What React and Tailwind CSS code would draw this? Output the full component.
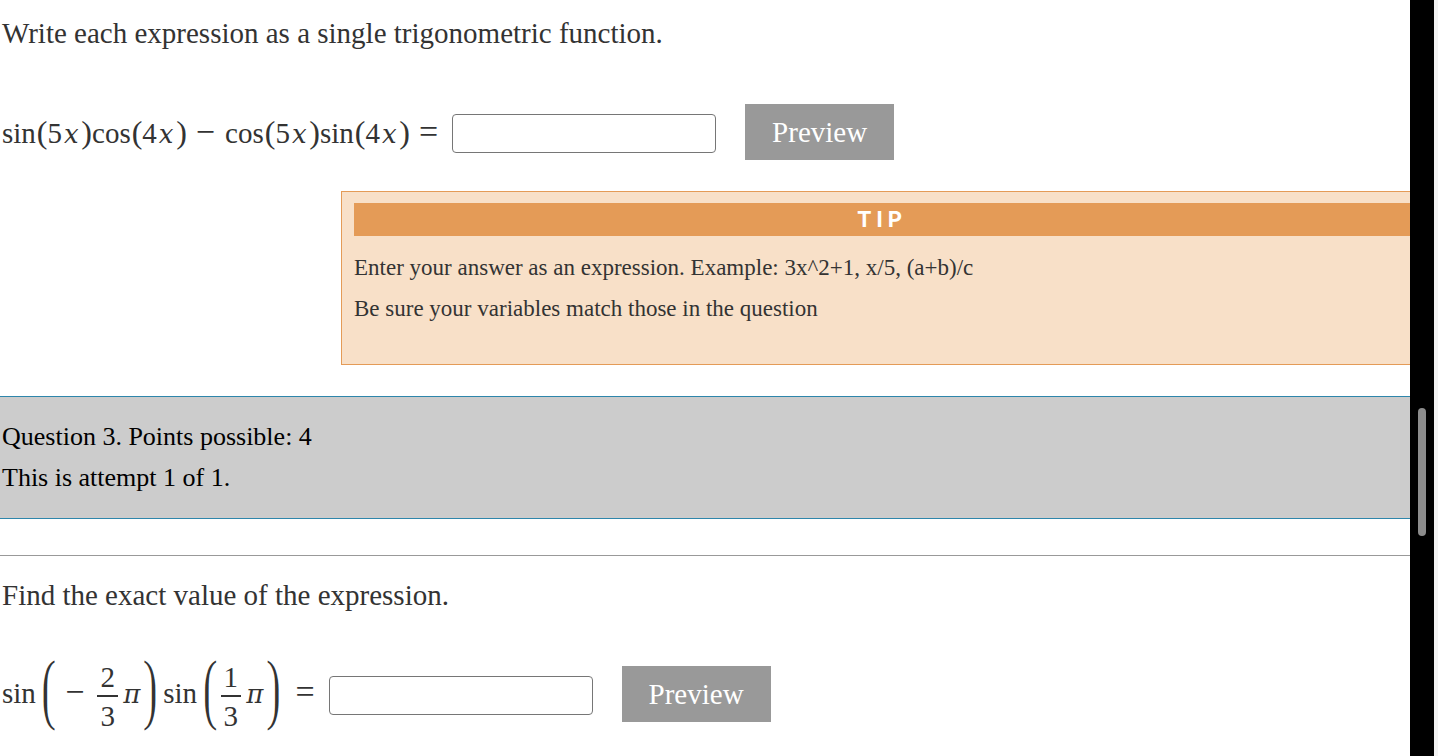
const MATH_FONT = "font-['DejaVu_Math_TeX_Gyre',serif]";

const Fn = ({ children }) => (
  <mi mathvariant="normal" className="font-['Liberation_Serif',serif] text-[29px]">
    {children}
  </mi>
);

const Variable = ({ children }) => <mi className={`${MATH_FONT} text-[26px]`}>{children}</mi>;

// Plain parenthesis for one line of text
const Paren = ({ children }) => (
  <mo stretchy="false" lspace="1px" rspace="0px" className="text-[32px]">
    {children}
  </mo>
);

// Parenthesis that grows with the fraction inside it
const TallParen = ({ children, lspace = '0px', rspace = '0px' }) => (
  <mo stretchy="true" symmetric="true" lspace={lspace} rspace={rspace} className={`${MATH_FONT} text-[27px]`}>
    {children}
  </mo>
);

const Operator = ({ children }) => (
  <mo lspace="9px" rspace="10px" className="text-[34px]">
    {children}
  </mo>
);

// Trig function of a multiple of x, e.g. sin(5x)
const TrigTerm = ({ fn, factor }) => (
  <mrow>
    <Fn>{fn}</Fn>
    <mrow>
      <Paren>(</Paren>
      <mn>{factor}</mn>
      <Variable>x</Variable>
      <Paren>)</Paren>
    </mrow>
  </mrow>
);

// Fraction of pi, used inside the second question
const PiFraction = ({ top, bottom }) => (
  <>
    <mfrac displaystyle="true" className="px-[3px]">
      <mn className="px-[3px] pb-1">{top}</mn>
      <mn className="px-[3px] pt-1.5">{bottom}</mn>
    </mfrac>
    <Variable>π</Variable>
  </>
);

const AnswerRow = ({ id, expression }) => (
  <div className="flex items-center">
    <label htmlFor={id} className="pt-1 text-[29px]">
      <math className="font-['Liberation_Serif',serif]">{expression}</math>
    </label>
    <input
      id={id}
      type="text"
      className="mt-[3px] ml-1 h-[39px] w-66 rounded border border-[#767676] bg-white px-2 text-[26px]"
    />
    <button type="button" className="ml-[29px] h-14 bg-[#999999] px-[27px] pt-0.5 text-[29px] text-white">
      Preview
    </button>
  </div>
);

const TipBox = () => (
  <section className="ml-[341px] border border-r-0 border-[#e49b57] bg-[#f8e0c8] pt-[11px] pb-[35px] pl-3">
    <h2 className="bg-[#e49b57] text-center font-['Inter',sans-serif] text-[22px] leading-[33px] font-bold tracking-[5px] text-white">
      TIP
    </h2>
    <div className="pt-[11px] text-[23px] leading-[41px]">
      <p>Enter your answer as an expression. Example: 3x^2+1, x/5, (a+b)/c</p>
      <p>Be sure your variables match those in the question</p>
    </div>
  </section>
);

const QuestionInfo = () => (
  <section className="border-y border-[#2e86ab] bg-[#cccccc] px-0.5 pt-[19px] pb-5 text-[26px] leading-[41px] text-black">
    <p>Question 3. Points possible: 4</p>
    <p>This is attempt 1 of 1.</p>
  </section>
);

const App = () => {
  return (
    <div className="flex h-screen bg-white font-['Liberation_Serif',serif] text-[#333333]">
      <main className="min-w-0 flex-1 overflow-hidden">
        <section className="px-0.5 pt-3">
          <p className="text-[29px] leading-[42px]">Write each expression as a single trigonometric function.</p>
          <div className="pt-[50px]">
            <AnswerRow
              id="answer-2"
              expression={
                <mrow>
                  <TrigTerm fn="sin" factor="5" />
                  <TrigTerm fn="cos" factor="4" />
                  <Operator>−</Operator>
                  <TrigTerm fn="cos" factor="5" />
                  <TrigTerm fn="sin" factor="4" />
                  <Operator>=</Operator>
                </mrow>
              }
            />
          </div>
        </section>

        <div className="py-[31px]">
          <TipBox />
        </div>

        <QuestionInfo />

        <section className="mt-9 border-t border-[#999999] px-0.5 pt-[18px]">
          <p className="text-[29px] leading-[42px]">Find the exact value of the expression.</p>
          <div className="pt-10">
            <AnswerRow
              id="answer-3"
              expression={
                <mrow>
                  <Fn>sin</Fn>
                  <mrow>
                    <TallParen lspace="4px">(</TallParen>
                    <Operator>−</Operator>
                    <PiFraction top="2" bottom="3" />
                    <TallParen rspace="4px">)</TallParen>
                  </mrow>
                  <Fn>sin</Fn>
                  <mrow>
                    <TallParen lspace="4px">(</TallParen>
                    <PiFraction top="1" bottom="3" />
                    <TallParen rspace="4px">)</TallParen>
                  </mrow>
                  <Operator>=</Operator>
                </mrow>
              }
            />
          </div>
        </section>
      </main>

      {/* Scroll track */}
      <aside className="flex w-7 flex-none border-r-4 border-[#f3f3f3] bg-black">
        <div className="mx-auto mt-[408px] h-32 w-2 rounded-full bg-[#8c8c8c]" />
      </aside>
    </div>
  );
};

export default App;
